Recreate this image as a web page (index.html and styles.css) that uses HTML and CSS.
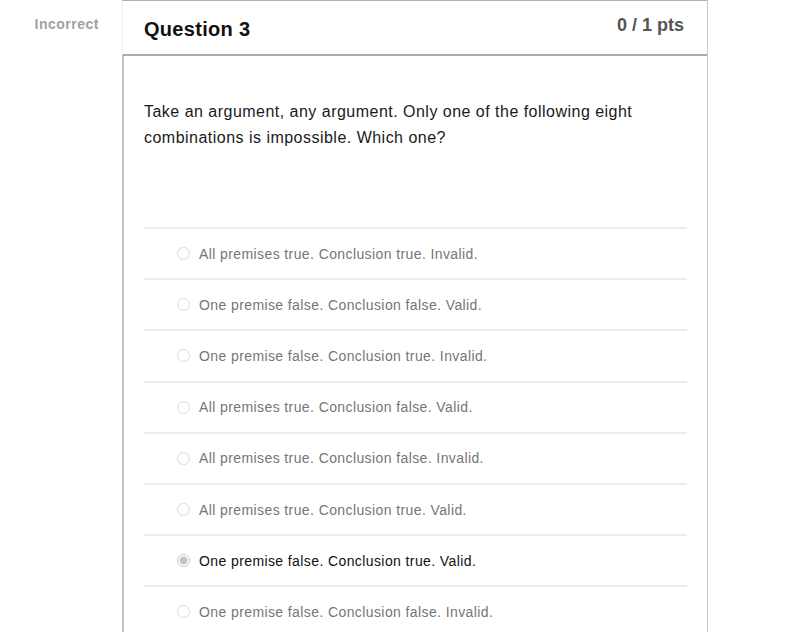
FILE: index.html
```html
<!DOCTYPE html>
<html lang="en">
<head>
    <meta charset="UTF-8">
    <meta name="viewport" content="width=device-width, initial-scale=1.0">
    <title>Quiz Results</title>
    <link rel="stylesheet" href="styles.css">
</head>
<body>
    <div class="page">
        <!-- Status column -->
        <div class="status">Incorrect</div>

        <!-- Question card -->
        <div class="question-card">
            <div class="question-header">
                <h2 class="question-title">Question 3</h2>
                <span class="question-points">0 / 1 pts</span>
            </div>

            <div class="question-body">
                <p class="question-text">Take an argument, any argument. Only one of the following eight combinations is impossible. Which one?</p>

                <div class="answers">
                    <div class="answer"><span class="radio"></span>All premises true. Conclusion true. Invalid.</div>
                    <div class="answer"><span class="radio"></span>One premise false. Conclusion false. Valid.</div>
                    <div class="answer"><span class="radio"></span>One premise false. Conclusion true. Invalid.</div>
                    <div class="answer"><span class="radio"></span>All premises true. Conclusion false. Valid.</div>
                    <div class="answer"><span class="radio"></span>All premises true. Conclusion false. Invalid.</div>
                    <div class="answer"><span class="radio"></span>All premises true. Conclusion true. Valid.</div>
                    <div class="answer selected"><span class="radio"></span>One premise false. Conclusion true. Valid.</div>
                    <div class="answer"><span class="radio"></span>One premise false. Conclusion false. Invalid.</div>
                </div>
            </div>
        </div>
    </div>
</body>
</html>
```

FILE: styles.css
```css
/* General Styles */
* {
    box-sizing: border-box;
}

html, body {
    margin: 0;
    height: 100%;
    overflow: hidden;
    font-family: "Liberation Sans", Arial, sans-serif;
    background-color: #fff;
    color: #222;
}

/* Page */
.page {
    display: flex;
    align-items: flex-start;
}

.status {
    width: 122px;
    padding: 16px 23px 0 0;
    text-align: right;
    font-size: 14px;
    font-weight: bold;
    color: #a0a0a0;
    letter-spacing: 0.5px;
}

/* Question Card */
.question-card {
    width: 586px;
    border-top: 1px solid #b0b0b0;
    border-right: 1px solid #c8c8c8;
}

.question-header {
    display: flex;
    justify-content: space-between;
    align-items: flex-start;
    height: 55px;
    padding: 17px 23px 0 21px;
    border-left: 1px solid #f0f0f0;
    border-bottom: 2px solid #aaa;
}

.question-title {
    margin: 0;
    font-size: 20px;
    font-weight: bold;
    color: #111;
    letter-spacing: 0.3px;
}

.question-points {
    margin-top: -3px;
    font-size: 18px;
    font-weight: bold;
    color: #555;
}

.question-body {
    padding: 43px 20px 0 20px;
    border-left: 2px solid #c2c2c2;
}

.question-text {
    margin: 0 0 76px;
    font-size: 16px;
    line-height: 26px;
    color: #1a1a1a;
    letter-spacing: 0.48px;
}

/* Answers */
.answer {
    display: flex;
    align-items: center;
    height: 51.2px;
    padding: 0 0 0 33px;
    border-top: 2px solid #ececec;
    font-size: 14px;
    color: #767676;
    letter-spacing: 0.4px;
}

.answer.selected {
    color: #111;
}

.radio {
    width: 13px;
    height: 13px;
    margin-right: 9px;
    border: 1px solid #dadada;
    border-radius: 50%;
    background: #fff;
}

.answer.selected .radio {
    border-color: #c9c9c9;
    background: radial-gradient(circle, #c4c4c4 0, #c4c4c4 3.5px, #fff 4.5px);
}
```
